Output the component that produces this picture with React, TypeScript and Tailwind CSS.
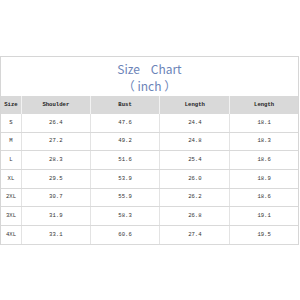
const headers = ['Size', 'Shoulder', 'Bust', 'Length', 'Length']

const rows = [
  ['S', '26.4', '47.6', '24.4', '18.1'],
  ['M', '27.2', '49.2', '24.8', '18.3'],
  ['L', '28.3', '51.6', '25.4', '18.6'],
  ['XL', '29.5', '53.9', '26.0', '18.9'],
  ['2XL', '30.7', '55.9', '26.2', '18.6'],
  ['3XL', '31.9', '58.3', '26.8', '19.1'],
  ['4XL', '33.1', '60.6', '27.4', '19.5'],
]

const cols = ['w-[20px]', 'w-[69px]', 'w-[70px]', 'w-[70px]', 'w-[69px]']

export default function App() {
  return (
    <div className="w-[300px] h-[300px] bg-white pt-[56px]">
      <div className="w-[299px] border-t border-l border-r border-[#d6d6d6]">
        <div className="h-[39px] flex flex-col items-center justify-center text-[#6b84b8] font-['Noto_Sans_CJK_SC',sans-serif]">
          <div className="text-[12px] leading-[17px]">Size&nbsp;&nbsp;&nbsp;&nbsp;Chart</div>
          <div className="text-[12px] leading-[17px]">（ inch ）</div>
        </div>
        <div className="font-['Liberation_Mono','Noto_Sans_CJK_SC',monospace] text-[5.6px] text-[#333]">
          <div className="flex h-[18px] bg-[#d9d9d9] font-bold text-[#222]">
            {headers.map((h, i) => (
              <div key={i} className={`${cols[i]} flex items-center justify-center ${i > 0 ? 'border-l border-[#f2f2f2]' : ''}`}>
                {h}
              </div>
            ))}
          </div>
          {rows.map((r, ri) => (
            <div key={ri} className="flex h-[18.7px] border-b border-[#d9d9d9]">
              {r.map((c, i) => (
                <div key={i} className={`${cols[i]} flex items-center justify-center ${i > 0 ? 'border-l border-[#e3e3e3]' : ''}`}>
                  {c}
                </div>
              ))}
            </div>
          ))}
        </div>
      </div>
    </div>
  )
}
